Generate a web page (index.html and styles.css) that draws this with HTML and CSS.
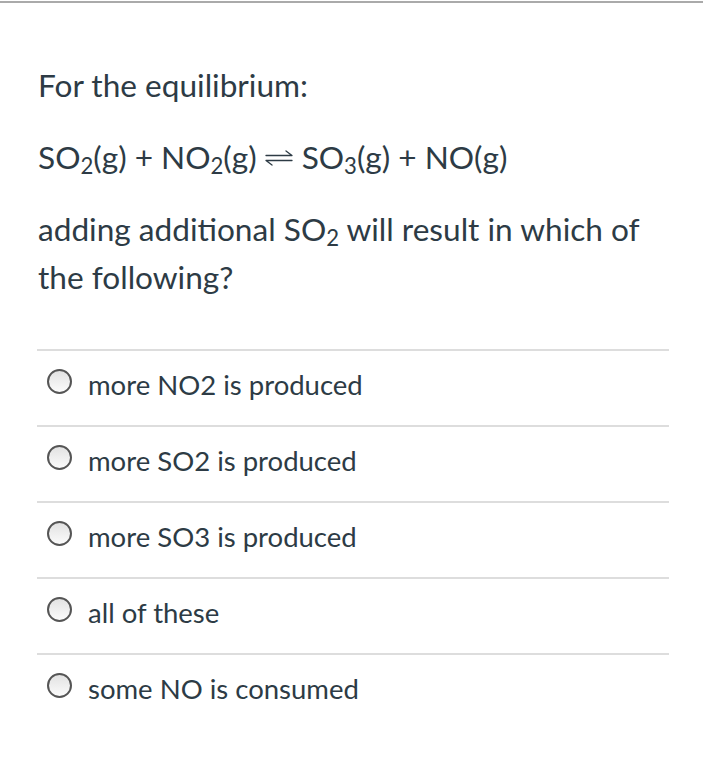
FILE: index.html
```html
<!DOCTYPE html>
<html lang="en">
<head>
<meta charset="utf-8">
<title>Quiz question</title>
<link rel="stylesheet" href="styles.css">
</head>
<body>
<div class="topbar"></div>
<div class="question">
  <div class="question-text">
    <p>For the equilibrium:</p>
    <p class="equation">SO<sub>2</sub>(g) + NO<sub>2</sub>(g)<svg class="eq-arrow" width="28" height="17" viewBox="0 0 28 17" aria-hidden="true"><path d="M1 6.5H27L21 2M27 11.5H1L7 16" fill="none" stroke="#2D3B45" stroke-width="1.3" stroke-linecap="round" stroke-linejoin="round"/></svg>SO<sub>3</sub>(g) + NO(g)</p>
    <p>adding additional SO<sub>2</sub> will result in which of the following?</p>
  </div>
  <div class="answers">
    <label class="answer"><input type="radio" name="q1" class="radio"><span class="answer-text">more NO2 is produced</span></label>
    <label class="answer"><input type="radio" name="q1" class="radio"><span class="answer-text">more SO2 is produced</span></label>
    <label class="answer"><input type="radio" name="q1" class="radio"><span class="answer-text">more SO3 is produced</span></label>
    <label class="answer"><input type="radio" name="q1" class="radio"><span class="answer-text">all of these</span></label>
    <label class="answer"><input type="radio" name="q1" class="radio"><span class="answer-text">some NO is consumed</span></label>
  </div>
</div>
</body>
</html>
```
FILE: styles.css
```css
html, body {
  margin: 0;
  padding: 0;
  background: #ffffff;
}

body {
  font-family: Lato, "Open Sans", "Liberation Sans", sans-serif;
  color: #2D3B45;
}

.topbar {
  margin-top: 1px;
  height: 2px;
  background: #aaaaaa;
}

.question {
  padding: 0 34px 0 37px;
}

.question-text {
  padding: 58px 0 0 1px;
  font-size: 31.6px;
  line-height: 48px;
}

.question-text p {
  margin: 0 0 24px 0;
}

sub {
  font-size: 70%;
  line-height: 0;
  vertical-align: -5px;
}

.equation {
  white-space: nowrap;
}

.eq-arrow {
  vertical-align: 3px;
  margin: 0 9px 0 8px;
}

.answers {
  margin-top: 48px;
}

.answer {
  display: flex;
  align-items: flex-start;
  height: 74px;
  border-top: 2px solid #dddddd;
  padding-left: 10px;
  font-size: 27.5px;
}

.radio {
  appearance: none;
  -webkit-appearance: none;
  margin: 18px 16px 0 0;
  width: 25px;
  height: 25px;
  border-radius: 50%;
  border: 2px solid #555555;
  background: linear-gradient(to bottom, #e2e2e2, #fbfbfb);
  box-sizing: border-box;
  flex: none;
}

.answer-text {
  line-height: 1;
  margin-top: 20px;
}
```
